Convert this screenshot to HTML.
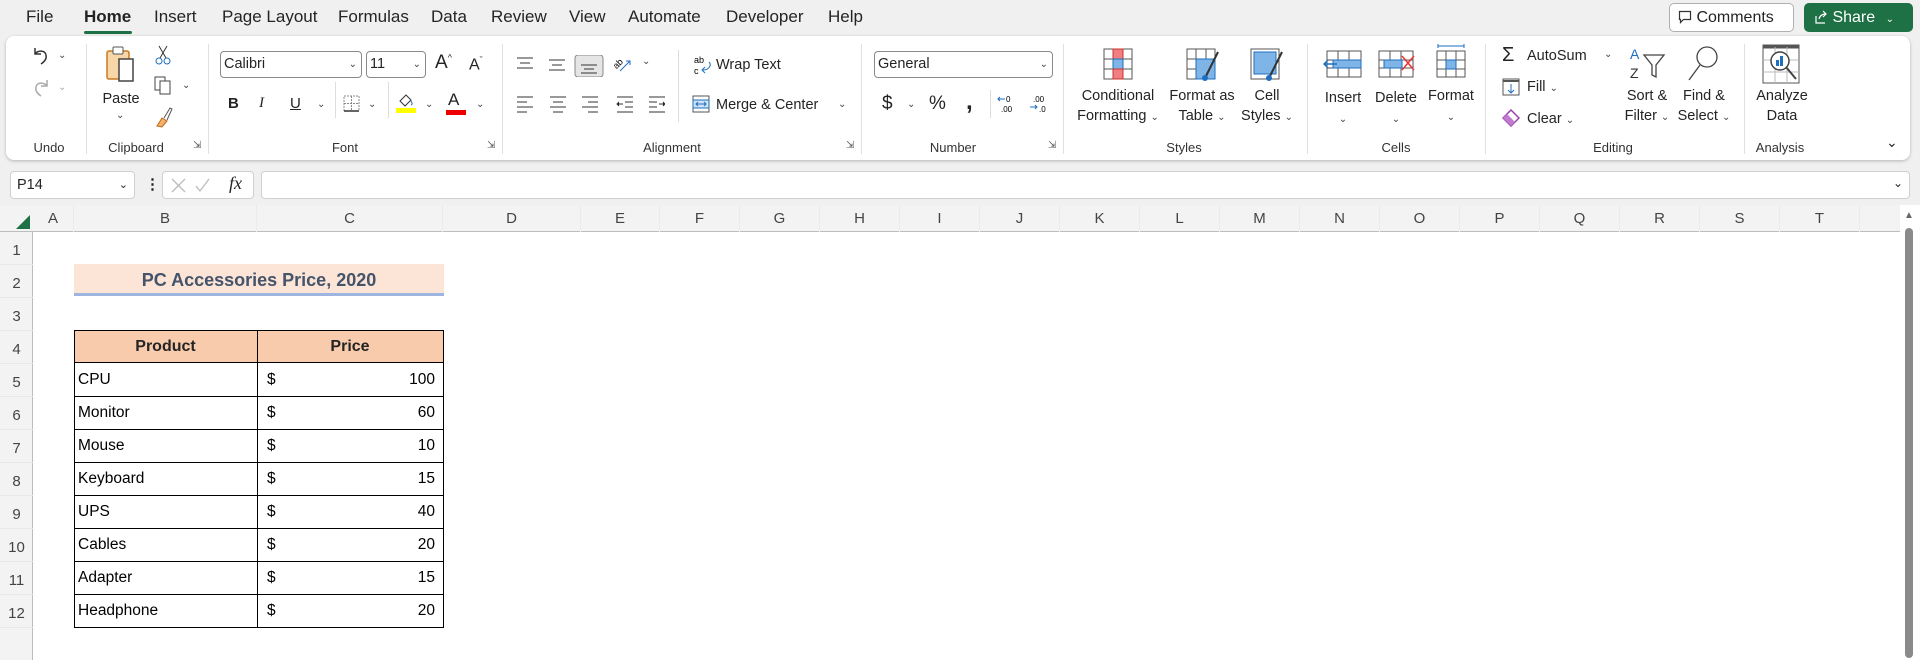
<!DOCTYPE html>
<html><head><meta charset="utf-8"><style>
*{margin:0;padding:0;box-sizing:border-box}
body{width:1920px;height:660px;overflow:hidden;background:#f0f0f0;font-family:"Liberation Sans",sans-serif;color:#242424;position:relative}
.a{position:absolute;white-space:nowrap}
.tab{position:absolute;top:7px;font-size:17px;color:#242424}
.rib{position:absolute;left:6px;top:36px;width:1904px;height:124px;background:#fff;border-radius:8px;box-shadow:0 1px 3px rgba(0,0,0,.25)}
.gl{position:absolute;top:140px;font-size:13px;color:#333;transform:translateX(-50%)}
.sep{position:absolute;top:44px;width:1px;height:110px;background:#e0e0e0}
.s14{font-size:14.5px}
.c{transform:translateX(-50%);text-align:center;line-height:20px}
.chev{font-size:10px;color:#444}
.box{position:absolute;border:1px solid #8a8a8a;border-radius:4px;background:#fff}
.colh{position:absolute;top:205px;height:27px;font-size:15px;color:#444;text-align:center;line-height:27px;border-right:1px solid #ebebeb}
.rowh{position:absolute;left:0;width:33px;font-size:15px;color:#444;text-align:center;border-bottom:1px solid #e8e8e8}
.cell{position:absolute;font-size:15.5px;color:#000;line-height:32px;padding-left:4px}
</style></head><body>
<span class="tab" style="left:26px">File</span>
<span class="tab" style="left:84px;font-weight:bold">Home</span>
<div class="a" style="left:84px;top:31px;width:48px;height:3px;background:#1e7145;border-radius:2px"></div>
<span class="tab" style="left:154px">Insert</span>
<span class="tab" style="left:222px">Page Layout</span>
<span class="tab" style="left:338px">Formulas</span>
<span class="tab" style="left:431px">Data</span>
<span class="tab" style="left:491px">Review</span>
<span class="tab" style="left:569px">View</span>
<span class="tab" style="left:628px">Automate</span>
<span class="tab" style="left:726px">Developer</span>
<span class="tab" style="left:828px">Help</span>

<div class="a" style="left:1669px;top:3px;width:125px;height:29px;border:1px solid #b0b0b0;border-radius:5px;background:#fff;font-size:16px;line-height:27px;padding-left:8px">
<svg width="14" height="14" style="vertical-align:-2px" viewBox="0 0 14 14"><path d="M1.5 1.5h11v8h-7l-3 3v-3h-1z" fill="none" stroke="#333" stroke-width="1.2"/></svg> Comments</div>
<div class="a" style="left:1804px;top:3px;width:109px;height:29px;border-radius:5px;background:#1e7145;color:#fff;font-size:16px;line-height:29px;padding-left:10px">
<svg width="14" height="14" style="vertical-align:-2px" viewBox="0 0 14 14"><path d="M2 6v7h9M5 9c1-4 4-5 7-5M9 1l3 3-3 3" fill="none" stroke="#fff" stroke-width="1.2"/></svg> Share <span style="font-size:10px;margin-left:6px">&#8964;</span></div>

<div class="rib"></div>
<div class="sep" style="left:86px"></div><div class="sep" style="left:208px"></div><div class="sep" style="left:502px"></div><div class="sep" style="left:861px"></div><div class="sep" style="left:1063px"></div><div class="sep" style="left:1307px"></div><div class="sep" style="left:1485px"></div><div class="sep" style="left:1744px"></div>

<!-- Undo -->
<svg class="a" style="left:30px;top:44px" width="22" height="22" viewBox="0 0 22 22"><path d="M5 4v6h6M5 10c3-4 10-4 11 1 1 4-2 7-5 9" fill="none" stroke="#333" stroke-width="1.5"/></svg>
<span class="a chev" style="left:58px;top:50px">&#8964;</span>
<svg class="a" style="left:30px;top:76px" width="22" height="22" viewBox="0 0 22 22"><path d="M17 4v6h-6M17 10c-3-4-10-4-11 1-1 4 2 7 5 9" fill="none" stroke="#aaa" stroke-width="1.5"/></svg>
<span class="a chev" style="left:58px;top:82px;color:#aaa">&#8964;</span>
<span class="gl" style="left:49px">Undo</span>

<!-- Clipboard -->
<svg class="a" style="left:105px;top:45px" width="34" height="40" viewBox="0 0 34 40"><rect x="2" y="6" width="22" height="28" rx="2" fill="#f7d7a7" stroke="#c87a1f" stroke-width="1.5"/><rect x="8" y="2" width="10" height="7" rx="1" fill="#fff" stroke="#555"/><rect x="14" y="14" width="14" height="22" fill="#fff" stroke="#444" stroke-width="1.5"/></svg>
<span class="a s14 c" style="left:121px;top:89px">Paste</span>
<span class="a chev" style="left:116px;top:110px">&#8964;</span>
<svg class="a" style="left:155px;top:45px" width="16" height="20" viewBox="0 0 16 20"><path d="M4 1l7 12M12 1L5 13" stroke="#333" fill="none"/><circle cx="4" cy="16" r="3" fill="none" stroke="#1e6fbf"/><circle cx="12" cy="16" r="3" fill="none" stroke="#1e6fbf"/></svg>
<svg class="a" style="left:154px;top:76px" width="18" height="20" viewBox="0 0 18 20"><rect x="1" y="1" width="10" height="13" fill="#fff" stroke="#444"/><rect x="6" y="5" width="10" height="13" fill="#fff" stroke="#444"/></svg>
<span class="a chev" style="left:182px;top:80px">&#8964;</span>
<svg class="a" style="left:154px;top:106px" width="20" height="22" viewBox="0 0 20 22"><path d="M3 20l5-8 5 3-5 6z" fill="#f4b16a" stroke="#c0661a"/><path d="M10 12l6-10 2 1-5 11" fill="none" stroke="#555"/></svg>
<span class="gl" style="left:136px">Clipboard</span>
<span class="a" style="left:193px;top:140px;font-size:10px;color:#555">&#8690;</span>

<!-- Font -->
<div class="box" style="left:220px;top:51px;width:142px;height:27px;font-size:14.5px;line-height:25px;padding-left:3px">Calibri<span class="chev" style="position:absolute;right:4px">&#8964;</span></div>
<div class="box" style="left:366px;top:51px;width:60px;height:27px;font-size:14.5px;line-height:25px;padding-left:3px">11<span class="chev" style="position:absolute;right:4px">&#8964;</span></div>
<span class="a" style="left:435px;top:52px;font-size:19px">A<sup style="font-size:9px">^</sup></span>
<span class="a" style="left:469px;top:55px;font-size:16px">A<sup style="font-size:9px">&#711;</sup></span>
<span class="a" style="left:228px;top:95px;font-size:15px;font-weight:bold">B</span>
<span class="a" style="left:259px;top:95px;font-size:15px;font-style:italic;font-family:'Liberation Serif',serif">I</span>
<span class="a" style="left:290px;top:95px;font-size:15px;text-decoration:underline">U</span>
<span class="a chev" style="left:317px;top:99px">&#8964;</span>
<div class="a" style="left:335px;top:82px;width:1px;height:36px;background:#ddd"></div>
<svg class="a" style="left:343px;top:95px" width="17" height="17" viewBox="0 0 17 17"><rect x="1" y="1" width="15" height="15" fill="none" stroke="#888" stroke-dasharray="2 1"/><path d="M8.5 1v15M1 8.5h15" stroke="#888" stroke-dasharray="2 1"/><path d="M1 16h15" stroke="#333" stroke-width="1.5"/></svg>
<span class="a chev" style="left:368px;top:99px">&#8964;</span>
<div class="a" style="left:388px;top:82px;width:1px;height:36px;background:#ddd"></div>
<svg class="a" style="left:396px;top:91px" width="20" height="22" viewBox="0 0 20 22"><path d="M4 10l6-6 5 5-6 6z" fill="none" stroke="#333"/><path d="M15 10c1 2 2 3 0 4" stroke="#1e6fbf" fill="none"/><rect x="0" y="17" width="20" height="5" fill="#ffff00"/></svg>
<span class="a chev" style="left:425px;top:99px">&#8964;</span>
<span class="a" style="left:448px;top:90px;font-size:17px">A</span>
<div class="a" style="left:446px;top:110px;width:20px;height:5px;background:#e00"></div>
<span class="a chev" style="left:476px;top:99px">&#8964;</span>
<span class="gl" style="left:345px">Font</span>
<span class="a" style="left:487px;top:140px;font-size:10px;color:#555">&#8690;</span>

<!-- Alignment -->
<svg class="a" style="left:515px;top:55px" width="120" height="22" viewBox="0 0 120 22"><path d="M2 3h16M5 8h10M2 13h16" stroke="#333"/><path d="M34 5h16M37 10h10M34 15h16" stroke="#333"/><rect x="60" y="0" width="28" height="22" rx="3" fill="#e5e5e5" stroke="#888"/><path d="M66 10h16M69 14h10M66 18h16" stroke="#333"/></svg>
<svg class="a" style="left:612px;top:53px" width="22" height="22" viewBox="0 0 22 22"><text x="1" y="12" font-size="9" font-family="Liberation Sans" transform="rotate(-45 8 10)">ab</text><path d="M8 18l10-10M14 8h4v4" stroke="#1e6fbf" fill="none"/></svg>
<span class="a chev" style="left:642px;top:56px">&#8964;</span>
<div class="a" style="left:678px;top:50px;width:1px;height:72px;background:#ddd"></div>
<svg class="a" style="left:693px;top:54px" width="20" height="22" viewBox="0 0 20 22"><text x="1" y="9" font-size="9" font-family="Liberation Sans">ab</text><text x="1" y="20" font-size="9" font-family="Liberation Sans">c</text><path d="M16 8c3 3 0 8-6 8M12 13l-3 3 3 3" stroke="#1e6fbf" fill="none"/></svg>
<span class="a s14" style="left:716px;top:57px">Wrap Text</span>
<svg class="a" style="left:515px;top:94px" width="150" height="20" viewBox="0 0 150 20"><path d="M2 3h16M2 8h10M2 13h16M2 18h10" stroke="#333"/><path d="M35 3h16M38 8h10M35 13h16M38 18h10" stroke="#333"/><path d="M67 3h16M73 8h10M67 13h16M73 18h10" stroke="#333"/><path d="M102 3h16M110 8h8M110 13h8M102 18h16M108 10h-6M104 8l-2 2 2 2" stroke="#333"/><path d="M134 3h16M134 8h8M134 13h8M134 18h16M144 10h6M148 8l2 2-2 2" stroke="#333"/></svg>
<svg class="a" style="left:692px;top:95px" width="18" height="18" viewBox="0 0 18 18"><rect x="1" y="1" width="16" height="16" fill="none" stroke="#555"/><rect x="1" y="5" width="16" height="8" fill="#cfe3f7" stroke="#1e6fbf"/><path d="M4 9h10M6 7l-2 2 2 2M12 7l2 2-2 2" stroke="#1e6fbf" fill="none"/></svg>
<span class="a s14" style="left:716px;top:97px">Merge &amp; Center</span>
<span class="a chev" style="left:838px;top:99px">&#8964;</span>
<span class="gl" style="left:672px">Alignment</span>
<span class="a" style="left:846px;top:140px;font-size:10px;color:#555">&#8690;</span>

<!-- Number -->
<div class="box" style="left:874px;top:51px;width:179px;height:27px;font-size:14.5px;line-height:25px;padding-left:3px">General<span class="chev" style="position:absolute;right:4px">&#8964;</span></div>
<span class="a" style="left:882px;top:93px;font-size:19px">$</span>
<span class="a chev" style="left:907px;top:99px">&#8964;</span>
<span class="a" style="left:929px;top:93px;font-size:19px">%</span>
<span class="a" style="left:966px;top:88px;font-size:24px;font-weight:bold">,</span>
<div class="a" style="left:990px;top:90px;width:1px;height:28px;background:#ddd"></div>
<svg class="a" style="left:997px;top:93px" width="55" height="22" viewBox="0 0 55 22"><path d="M8 6H1M3 4L1 6l2 2" stroke="#1e6fbf" fill="none"/><text x="9" y="9" font-size="8" font-family="Liberation Sans">0</text><text x="4" y="19" font-size="8" font-family="Liberation Sans">.00</text><text x="36" y="9" font-size="8" font-family="Liberation Sans">.00</text><path d="M33 14h7M38 12l2 2-2 2" stroke="#1e6fbf" fill="none"/><text x="42" y="19" font-size="8" font-family="Liberation Sans">.0</text></svg>
<span class="gl" style="left:953px">Number</span>
<span class="a" style="left:1048px;top:140px;font-size:10px;color:#555">&#8690;</span>

<!-- Styles -->
<svg class="a" style="left:1103px;top:48px" width="30" height="32" viewBox="0 0 30 32"><rect x="1" y="1" width="28" height="30" fill="#fff" stroke="#555"/><path d="M1 11h28M1 21h28M10 1v30M20 1v30" stroke="#555"/><rect x="10" y="1" width="10" height="10" fill="#f08080" stroke="#c33"/><rect x="10" y="11" width="10" height="10" fill="#7fb4e6" stroke="#1e6fbf"/><rect x="10" y="21" width="10" height="10" fill="#f08080" stroke="#c33"/></svg>
<span class="a s14 c" style="left:1118px;top:86px">Conditional<br>Formatting <span class="chev">&#8964;</span></span>
<svg class="a" style="left:1186px;top:48px" width="34" height="36" viewBox="0 0 34 36"><rect x="1" y="1" width="28" height="30" fill="#fff" stroke="#555"/><path d="M1 11h28M1 21h28M10 1v30M20 1v30" stroke="#555"/><rect x="10" y="11" width="19" height="20" fill="#7fb4e6" stroke="#1e6fbf"/><path d="M32 4L20 28" stroke="#333" stroke-width="2"/><circle cx="19" cy="30" r="3" fill="#1e6fbf"/></svg>
<span class="a s14 c" style="left:1202px;top:86px">Format as<br>Table <span class="chev">&#8964;</span></span>
<svg class="a" style="left:1250px;top:48px" width="34" height="36" viewBox="0 0 34 36"><rect x="1" y="1" width="28" height="30" fill="#fff" stroke="#555"/><rect x="4" y="4" width="22" height="22" fill="#7fb4e6" stroke="#1e6fbf"/><path d="M32 4L20 28" stroke="#333" stroke-width="2"/><circle cx="19" cy="30" r="3" fill="#1e6fbf"/></svg>
<span class="a s14 c" style="left:1267px;top:86px">Cell<br>Styles <span class="chev">&#8964;</span></span>
<span class="gl" style="left:1184px">Styles</span>

<!-- Cells -->
<svg class="a" style="left:1323px;top:50px" width="40" height="28" viewBox="0 0 40 28"><rect x="4" y="1" width="34" height="26" fill="#fff" stroke="#555"/><path d="M4 10h34M4 18h34M15 1v26M26 1v26" stroke="#555"/><rect x="10" y="10" width="28" height="8" fill="#7fb4e6" stroke="#1e6fbf"/><path d="M14 14H1M5 10l-4 4 4 4" stroke="#1e6fbf" fill="none" stroke-width="1.5"/></svg>
<span class="a s14 c" style="left:1343px;top:88px">Insert<br><span class="chev">&#8964;</span></span>
<svg class="a" style="left:1378px;top:50px" width="38" height="28" viewBox="0 0 38 28"><rect x="1" y="1" width="34" height="26" fill="#fff" stroke="#555"/><path d="M1 10h34M1 18h34M12 1v26M23 1v26" stroke="#555"/><rect x="6" y="10" width="18" height="8" fill="#7fb4e6" stroke="#1e6fbf"/><path d="M24 6l12 14M36 6L24 20" stroke="#e33" stroke-width="1.5"/></svg>
<span class="a s14 c" style="left:1396px;top:88px">Delete<br><span class="chev">&#8964;</span></span>
<svg class="a" style="left:1435px;top:44px" width="32" height="34" viewBox="0 0 32 34"><path d="M3 2h26M3 0v4M29 0v4" stroke="#1e6fbf"/><rect x="2" y="7" width="28" height="26" fill="#fff" stroke="#555"/><path d="M2 16h28M2 25h28M11 7v26M21 7v26" stroke="#555"/><rect x="11" y="16" width="10" height="9" fill="#7fb4e6" stroke="#1e6fbf"/></svg>
<span class="a s14 c" style="left:1451px;top:86px">Format<br><span class="chev">&#8964;</span></span>
<span class="gl" style="left:1396px">Cells</span>

<!-- Editing -->
<span class="a" style="left:1502px;top:44px;font-size:20px">&Sigma;</span>
<span class="a s14" style="left:1527px;top:48px">AutoSum</span>
<span class="a chev" style="left:1604px;top:49px">&#8964;</span>
<svg class="a" style="left:1502px;top:78px" width="18" height="18" viewBox="0 0 18 18"><rect x="1" y="1" width="16" height="16" fill="#fff" stroke="#555"/><path d="M1 3h16" stroke="#555" stroke-width="2"/><path d="M9 6v9M6 12l3 3 3-3" stroke="#1e6fbf" fill="none"/></svg>
<span class="a s14" style="left:1527px;top:79px">Fill <span class="chev">&#8964;</span></span>
<svg class="a" style="left:1502px;top:109px" width="18" height="18" viewBox="0 0 18 18"><path d="M9 1l8 8-8 8-8-8z" fill="#fff" stroke="#9b3fae" stroke-width="1.5"/><path d="M1 9l4-4 8 8-4 4z" fill="#c07ad0"/></svg>
<span class="a s14" style="left:1527px;top:111px">Clear <span class="chev">&#8964;</span></span>
<svg class="a" style="left:1628px;top:45px" width="38" height="36" viewBox="0 0 38 36"><text x="2" y="14" font-size="14" fill="#1e6fbf" font-family="Liberation Sans">A</text><text x="2" y="33" font-size="14" fill="#333" font-family="Liberation Sans">Z</text><path d="M16 10h20l-8 10v12l-4-2V20z" fill="none" stroke="#444" stroke-width="1.3"/></svg>
<span class="a s14 c" style="left:1647px;top:86px">Sort &amp;<br>Filter <span class="chev">&#8964;</span></span>
<svg class="a" style="left:1686px;top:44px" width="34" height="38" viewBox="0 0 34 38"><circle cx="21" cy="13" r="10" fill="none" stroke="#444" stroke-width="1.3"/><path d="M14 21L3 36" stroke="#444" stroke-width="1.3"/></svg>
<span class="a s14 c" style="left:1704px;top:86px">Find &amp;<br>Select <span class="chev">&#8964;</span></span>
<span class="gl" style="left:1613px">Editing</span>

<!-- Analysis -->
<svg class="a" style="left:1761px;top:43px" width="42" height="42" viewBox="0 0 42 42"><rect x="2" y="2" width="36" height="38" fill="#fff" stroke="#555"/><path d="M2 4h36" stroke="#555" stroke-width="3"/><path d="M2 17h36M2 29h36M14 4v36M26 4v36" stroke="#bbb"/><circle cx="19" cy="18" r="9" fill="#fff" stroke="#444" stroke-width="1.5"/><rect x="15" y="17" width="3" height="6" fill="#1e6fbf"/><rect x="19" y="13" width="3" height="10" fill="#1e6fbf"/><path d="M25 24l10 12" stroke="#444" stroke-width="2"/></svg>
<span class="a s14 c" style="left:1782px;top:86px">Analyze<br>Data</span>
<span class="gl" style="left:1780px">Analysis</span>
<span class="a" style="left:1886px;top:134px;font-size:14px">&#8964;</span>

<!-- Formula bar -->
<div class="box" style="left:10px;top:171px;width:125px;height:28px;border-color:#d0d0d0;font-size:14.5px;line-height:26px;padding-left:6px">P14<span style="position:absolute;right:6px;font-size:11px">&#8964;</span></div>
<span class="a" style="left:145px;top:175px;font-size:15px;font-weight:bold">&#8942;</span>
<div class="box" style="left:162px;top:171px;width:92px;height:28px;border-color:#d0d0d0"></div>
<svg class="a" style="left:170px;top:177px" width="80" height="18" viewBox="0 0 80 18"><path d="M2 2l13 13M15 2L2 15" stroke="#bbb" stroke-width="1.3"/><path d="M26 9l4 5 9-12" stroke="#bbb" stroke-width="1.3" fill="none"/></svg>
<span class="a" style="left:229px;top:173px;font-size:18px;font-style:italic;font-family:'Liberation Serif',serif">fx</span>
<div class="box" style="left:261px;top:171px;width:1649px;height:28px;border-color:#d0d0d0"><span style="position:absolute;right:6px;top:4px;font-size:12px">&#8964;</span></div>

<!-- Sheet -->
<div class="a" style="left:0;top:205px;width:1920px;height:455px;background:#fff"></div>
<div class="a" style="left:0;top:205px;width:1900px;height:27px;background:#f3f3f3;border-bottom:1px solid #bdbdbd"></div>
<div class="a" style="left:0;top:232px;width:33px;height:428px;background:#f3f3f3;border-right:1px solid #bdbdbd"></div>
<svg class="a" style="left:14px;top:214px" width="16" height="16" viewBox="0 0 16 16"><path d="M16 1V15H2z" fill="#1e7145"/></svg>
<div class="colh" style="left:33px;width:41px">A</div>
<div class="colh" style="left:74px;width:183px">B</div>
<div class="colh" style="left:257px;width:186px">C</div>
<div class="colh" style="left:443px;width:138px">D</div>
<div class="colh" style="left:581px;width:79px">E</div>
<div class="colh" style="left:660px;width:80px">F</div>
<div class="colh" style="left:740px;width:80px">G</div>
<div class="colh" style="left:820px;width:80px">H</div>
<div class="colh" style="left:900px;width:80px">I</div>
<div class="colh" style="left:980px;width:80px">J</div>
<div class="colh" style="left:1060px;width:80px">K</div>
<div class="colh" style="left:1140px;width:80px">L</div>
<div class="colh" style="left:1220px;width:80px">M</div>
<div class="colh" style="left:1300px;width:80px">N</div>
<div class="colh" style="left:1380px;width:80px">O</div>
<div class="colh" style="left:1460px;width:80px">P</div>
<div class="colh" style="left:1540px;width:80px">Q</div>
<div class="colh" style="left:1620px;width:80px">R</div>
<div class="colh" style="left:1700px;width:80px">S</div>
<div class="colh" style="left:1780px;width:80px">T</div>
<div class="rowh" style="top:232px;height:33px;line-height:38px">1</div>
<div class="rowh" style="top:265px;height:33px;line-height:38px">2</div>
<div class="rowh" style="top:298px;height:33px;line-height:38px">3</div>
<div class="rowh" style="top:331px;height:33px;line-height:38px">4</div>
<div class="rowh" style="top:364px;height:33px;line-height:38px">5</div>
<div class="rowh" style="top:397px;height:33px;line-height:38px">6</div>
<div class="rowh" style="top:430px;height:33px;line-height:38px">7</div>
<div class="rowh" style="top:463px;height:33px;line-height:38px">8</div>
<div class="rowh" style="top:496px;height:33px;line-height:38px">9</div>
<div class="rowh" style="top:529px;height:33px;line-height:38px">10</div>
<div class="rowh" style="top:562px;height:33px;line-height:38px">11</div>
<div class="rowh" style="top:595px;height:33px;line-height:38px">12</div>
<!-- scrollbar -->
<div class="a" style="left:1900px;top:205px;width:20px;height:455px;background:#fff"></div>
<span class="a" style="left:1904px;top:210px;font-size:10px;color:#666">&#9650;</span>
<div class="a" style="left:1905px;top:228px;width:8px;height:430px;background:#8a8a8a;border-radius:4px"></div>

<!-- Title -->
<div class="a" style="left:74px;top:264px;width:370px;height:32px;background:#fce4d6;border-bottom:3px solid #9db5e0;text-align:center;font-size:18px;font-weight:bold;color:#44546a;line-height:32px">PC Accessories Price, 2020</div>

<!-- Table -->
<div class="a" style="left:74px;top:330px;width:370px;height:298px;border:1.5px solid #000"></div>
<div class="a" style="left:75px;top:331px;width:368px;height:32px;background:#f8cbad;border-bottom:1px solid #000"></div>
<div class="a" style="left:257px;top:330px;width:1px;height:298px;background:#000"></div>
<span class="a" style="left:74px;top:331px;width:183px;text-align:center;font-size:16px;font-weight:bold;line-height:32px">Product</span>
<span class="a" style="left:257px;top:331px;width:186px;text-align:center;font-size:16px;font-weight:bold;line-height:32px">Price</span>
<div class="a" style="left:74px;top:396px;width:370px;height:1px;background:#000"></div>
<div class="a" style="left:74px;top:429px;width:370px;height:1px;background:#000"></div>
<div class="a" style="left:74px;top:462px;width:370px;height:1px;background:#000"></div>
<div class="a" style="left:74px;top:495px;width:370px;height:1px;background:#000"></div>
<div class="a" style="left:74px;top:528px;width:370px;height:1px;background:#000"></div>
<div class="a" style="left:74px;top:561px;width:370px;height:1px;background:#000"></div>
<div class="a" style="left:74px;top:594px;width:370px;height:1px;background:#000"></div>
<div class="cell" style="left:74px;top:364px">CPU</div>
<div class="cell" style="left:74px;top:397px">Monitor</div>
<div class="cell" style="left:74px;top:430px">Mouse</div>
<div class="cell" style="left:74px;top:463px">Keyboard</div>
<div class="cell" style="left:74px;top:496px">UPS</div>
<div class="cell" style="left:74px;top:529px">Cables</div>
<div class="cell" style="left:74px;top:562px">Adapter</div>
<div class="cell" style="left:74px;top:595px">Headphone</div>
<div class="cell" style="left:263px;top:364px">$</div><div class="cell" style="left:263px;top:397px">$</div><div class="cell" style="left:263px;top:430px">$</div><div class="cell" style="left:263px;top:463px">$</div><div class="cell" style="left:263px;top:496px">$</div><div class="cell" style="left:263px;top:529px">$</div><div class="cell" style="left:263px;top:562px">$</div><div class="cell" style="left:263px;top:595px">$</div>
<div class="cell" style="left:335px;width:100px;text-align:right;top:364px">100</div>
<div class="cell" style="left:335px;width:100px;text-align:right;top:397px">60</div>
<div class="cell" style="left:335px;width:100px;text-align:right;top:430px">10</div>
<div class="cell" style="left:335px;width:100px;text-align:right;top:463px">15</div>
<div class="cell" style="left:335px;width:100px;text-align:right;top:496px">40</div>
<div class="cell" style="left:335px;width:100px;text-align:right;top:529px">20</div>
<div class="cell" style="left:335px;width:100px;text-align:right;top:562px">15</div>
<div class="cell" style="left:335px;width:100px;text-align:right;top:595px">20</div>
</body></html>
